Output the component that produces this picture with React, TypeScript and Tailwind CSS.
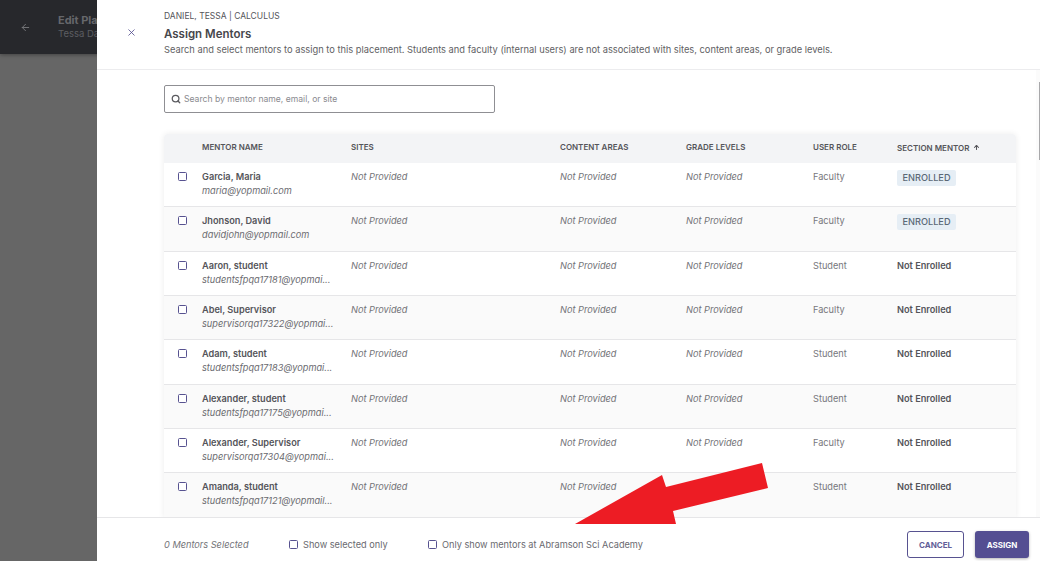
import React from 'react';
import { ArrowLeft, ArrowUp, Search, X } from 'lucide-react';

interface Mentor {
  name: string;
  email: string;
  role: string;
  enrolled: boolean;
}

// emails are shortened the way the table column shows them
const mentors: Mentor[] = [
  { name: 'Garcia, Maria', email: 'maria@yopmail.com', role: 'Faculty', enrolled: true },
  { name: 'Jhonson, David', email: 'davidjohn@yopmail.com', role: 'Faculty', enrolled: true },
  { name: 'Aaron, student', email: 'studentsfpqa17181@yopmai...', role: 'Student', enrolled: false },
  { name: 'Abel, Supervisor', email: 'supervisorqa17322@yopmai...', role: 'Faculty', enrolled: false },
  { name: 'Adam, student', email: 'studentsfpqa17183@yopmai...', role: 'Student', enrolled: false },
  { name: 'Alexander, student', email: 'studentsfpqa17175@yopmai...', role: 'Student', enrolled: false },
  { name: 'Alexander, Supervisor', email: 'supervisorqa17304@yopmai...', role: 'Faculty', enrolled: false },
  { name: 'Amanda, student', email: 'studentsfpqa17121@yopmail...', role: 'Student', enrolled: false },
];

const rowGrid = 'grid grid-cols-[38px_149px_209px_126px_127px_84px_1fr]';

const Checkbox = () => (
  <span className="block h-[9px] w-[9px] rounded-[1.5px] border-[1.5px] border-[#575290] bg-white" />
);

const App: React.FC = () => {
  return (
    <div className="relative h-[561px] w-[1040px] overflow-hidden bg-[#666666] font-['Inter',sans-serif]">
      {/* Page behind the drawer */}
      <div className="flex h-[54px] items-center bg-[#27282c] pl-[20px] shadow-[0_1px_4px_rgba(0,0,0,0.35)]">
        <ArrowLeft className="h-[11px] w-[11px] text-[#77787c]" />
        <div className="ml-[27px]">
          <div className="text-[11px] font-bold leading-[14px] text-[#66676b]">Edit Placement</div>
          <div className="text-[9.5px] leading-[14px] text-[#5c5d61]">Tessa Daniel</div>
        </div>
      </div>

      {/* Drawer */}
      <div className="absolute inset-y-0 left-[97px] right-0 flex flex-col bg-white">
        <div className="flex h-[70px] flex-none border-b border-[#ececee]">
          <div className="flex w-[67px] flex-none items-start pl-[29px] pt-[27px]">
            <X className="h-[11px] w-[11px] text-[#4f4a8c]" strokeWidth={1.75} />
          </div>
          <div className="pt-[10px]">
            <div className="text-[8.5px] leading-[12px] text-[#55555a]">DANIEL, TESSA | CALCULUS</div>
            <div className="mt-[4px] text-[11.5px] font-semibold leading-[16px] text-[#47474c]">Assign Mentors</div>
            <div className="mt-[1px] text-[9.3px] leading-[14px] text-[#5f5f64]">
              Search and select mentors to assign to this placement. Students and faculty (internal users) are not associated with sites, content areas, or grade levels.
            </div>
          </div>
        </div>

        <div className="relative min-h-0 flex-1 overflow-hidden pl-[67px] pr-[24px]">
          <div className="mt-[15px] flex h-[28px] w-[331px] items-center rounded-[2px] border border-[#8f8f93] pl-[6px]">
            <Search className="h-[10px] w-[10px] text-[#5a5a5f]" strokeWidth={3} />
            <span className="ml-[3px] text-[8.6px] text-[#8a8a8f]">Search by mentor name, email, or site</span>
          </div>

          <div className="mt-[21px] rounded-t-[4px] shadow-[0_0_6px_rgba(0,0,0,0.08)]">
            <div className={`${rowGrid} h-[29.2px] items-center rounded-t-[4px] bg-[#f3f4f6] pb-[4px] text-[8px] font-semibold text-[#55555a]`}>
              <span />
              <span>MENTOR NAME</span>
              <span>SITES</span>
              <span>CONTENT AREAS</span>
              <span>GRADE LEVELS</span>
              <span>USER ROLE</span>
              <span className="flex translate-y-[1px] items-center gap-[4px]">
                SECTION MENTOR
                <ArrowUp className="h-[7px] w-[7px]" strokeWidth={3.5} />
              </span>
            </div>
            {mentors.map((mentor, index) => (
              <div
                key={mentor.email}
                className={`${rowGrid} h-[44.3px] border-b border-[#e6e6e8] pt-[7px] text-[9.2px] leading-[14px] ${index % 2 === 1 ? 'bg-[#fafafa]' : 'bg-white'}`}
              >
                <span className="pl-[14px] pt-[2px]"><Checkbox /></span>
                <div>
                  <div className="font-semibold text-[#55555a]">{mentor.name}</div>
                  <div className="italic text-[#6a6a6f]">{mentor.email}</div>
                </div>
                <span className="italic text-[#737378]">Not Provided</span>
                <span className="italic text-[#737378]">Not Provided</span>
                <span className="italic text-[#737378]">Not Provided</span>
                <span className="text-[#77777c]">{mentor.role}</span>
                {mentor.enrolled ? (
                  <span className="h-[16px] w-[59px] rounded-[2px] bg-[#e6eef5] text-center text-[9.2px] font-medium leading-[16px] text-[#5a6876]">ENROLLED</span>
                ) : (
                  <span className="font-semibold text-[#55555a]">Not Enrolled</span>
                )}
              </div>
            ))}
          </div>

          {/* Scrollbar */}
          <div className="absolute inset-y-0 right-0 w-[4px] bg-[#fbfbfb]">
            <div className="ml-[3px] mt-[12px] h-[78px] w-[1px] bg-[#a8a8aa]" />
          </div>
        </div>

        <div className="relative flex h-[44px] flex-none items-center border-t border-[#e6e6e8] bg-white pl-[67px] pr-[11px] pt-[10px] text-[9.2px]">
          <span className="w-[125px] italic text-[#737378]">0 Mentors Selected</span>
          <Checkbox />
          <span className="ml-[5px] w-[125px] text-[#6a6a6f]">Show selected only</span>
          <Checkbox />
          <span className="ml-[5px] text-[#6a6a6f]">Only show mentors at Abramson Sci Academy</span>
          <button className="ml-auto h-[27px] w-[57px] rounded-[3px] border border-[#575290] bg-white text-[8px] font-bold text-[#625e98]">CANCEL</button>
          <button className="ml-[11px] h-[27px] w-[54px] rounded-[3px] bg-[#544e92] text-[8px] font-bold text-white shadow-[0_1px_3px_rgba(0,0,0,0.3)]">ASSIGN</button>
        </div>
      </div>

      {/* Red annotation arrow */}
      <svg className="pointer-events-none absolute left-0 top-0" width="1040" height="561" viewBox="0 0 1040 561">
        <polygon points="575,524 662,475 666,487 762,463 768,488 673,511 676,524" fill="#ed1c24" />
      </svg>
    </div>
  );
};

export default App;
